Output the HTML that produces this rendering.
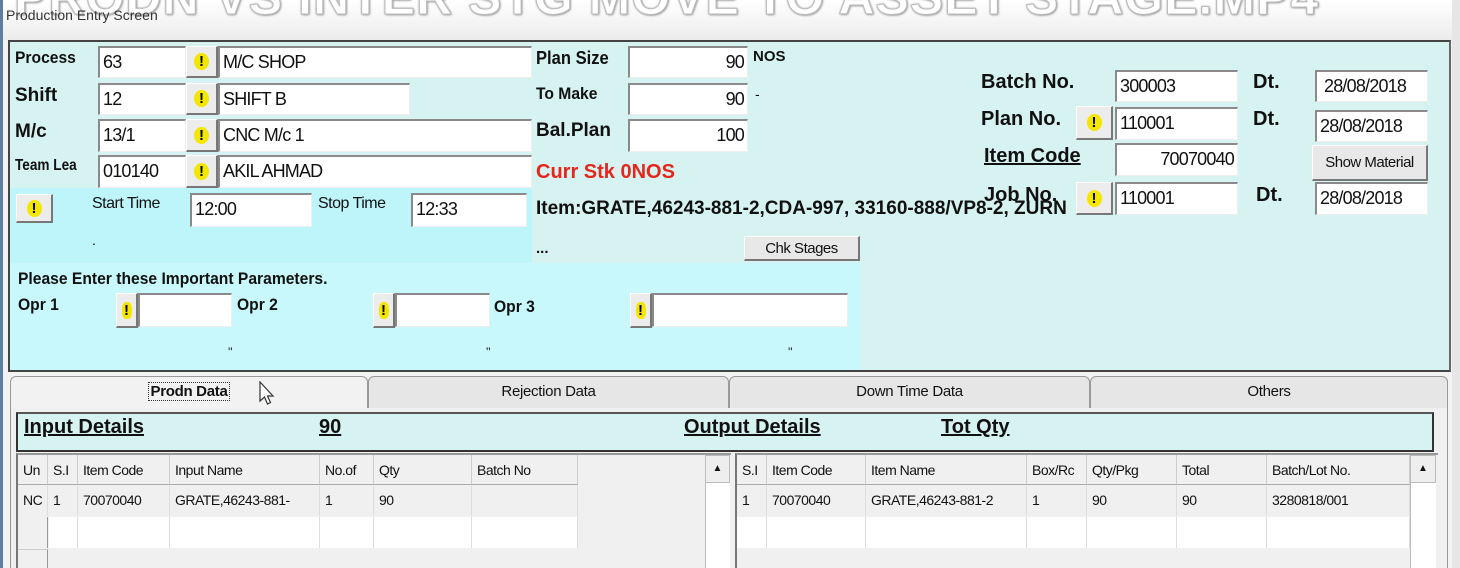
<!DOCTYPE html>
<html><head><meta charset="utf-8">
<style>
*{box-sizing:border-box;margin:0;padding:0}
html,body{width:1460px;height:568px;overflow:hidden}
body{background:#f3f3f3;font-family:"Liberation Sans",Arial,sans-serif;color:#111;position:relative}
.a{position:absolute}
.title{left:14px;top:-32px;font-size:50px;font-weight:bold;color:#fff;letter-spacing:1px;white-space:nowrap;text-shadow:0 0 2px #888,1px 1px 2px #999;-webkit-text-stroke:1px #bbb}
.inp{position:absolute;background:#fff;border-top:2px solid #8a8a8a;border-left:2px solid #8a8a8a;border-right:1px solid #eee;border-bottom:1px solid #eee;font-size:18px;padding:4px 3px 0 3px;white-space:nowrap;overflow:hidden;letter-spacing:-0.8px}
.r{text-align:right}
.btn{position:absolute;background:#ececec;border:1px solid #fff;border-right:2px solid #777;border-bottom:2px solid #777;display:flex;align-items:center;justify-content:center}
.ex{width:15px;height:17px;border-radius:50%;background:#f5e600;font-weight:bold;font-size:15px;line-height:17px;text-align:center;color:#000}
.lb{position:absolute;font-weight:bold;font-size:17px;white-space:nowrap}
.lbn{position:absolute;font-size:16px;white-space:nowrap;font-weight:bold;transform:scaleX(.92);transform-origin:left}
.pbtn{position:absolute;background:#e8e8e8;border:1px solid #fff;border-right:2px solid #777;border-bottom:2px solid #777;font-size:15px;text-align:center;letter-spacing:-0.5px}
.tab{position:absolute;top:376px;height:32px;background:#e6e6e6;border:1px solid #999;border-bottom:none;border-radius:6px 6px 0 0;font-size:15px;text-align:center;line-height:30px;letter-spacing:-0.3px}
.g{position:absolute;font-size:14px;letter-spacing:-0.5px}
.g div{position:absolute;white-space:nowrap;overflow:hidden;padding-left:5px}
.h{height:30px;line-height:30px;background:#f0f0f0;border-right:1px solid #ccc;border-bottom:1px solid #aaa}
.c{height:31px;line-height:31px;border-right:1px solid #ddd}
.w{background:#fff}
</style></head><body>
<div class="a" style="left:0;top:0;width:1460px;height:40px;background:linear-gradient(#fff,#ececec)"></div>
<div class="a title">PRODN VS INTER STG MOVE TO ASSET STAGE.MP4</div>
<div class="a" style="left:6px;top:7px;font-size:14px;color:#333">Production Entry Screen</div>
<div class="a" style="left:0;top:0;width:3px;height:568px;background:#5a7fa0"></div>
<div class="a" style="left:1452px;top:0;width:8px;height:568px;background:#e6e6e6"></div>

<div class="a" style="left:8px;top:40px;width:1443px;height:332px;background:#d6f3f1;border:2px solid #444;border-right-color:#666"></div>
<div class="a" style="left:10px;top:188px;width:522px;height:75px;background:#bdf5fa"></div>
<div class="a" style="left:10px;top:263px;width:850px;height:107px;background:#c8f8fb"></div>

<div class="lbn" style="left:15px;top:48px;font-size:17px">Process</div>
<div class="inp" style="left:98px;top:46px;width:88px;height:32px">63</div>
<div class="btn" style="left:186px;top:46px;width:32px;height:32px"><div class="ex">!</div></div>
<div class="inp" style="left:218px;top:46px;width:314px;height:32px">M/C SHOP</div>

<div class="lb" style="left:15px;top:85px;font-size:19px">Shift</div>
<div class="inp" style="left:98px;top:83px;width:88px;height:32px">12</div>
<div class="btn" style="left:186px;top:83px;width:32px;height:32px"><div class="ex">!</div></div>
<div class="inp" style="left:218px;top:83px;width:192px;height:32px">SHIFT B</div>

<div class="lb" style="left:15px;top:121px;font-size:19px">M/c</div>
<div class="inp" style="left:98px;top:119px;width:88px;height:33px">13/1</div>
<div class="btn" style="left:186px;top:119px;width:32px;height:33px"><div class="ex">!</div></div>
<div class="inp" style="left:218px;top:119px;width:314px;height:33px">CNC M/c 1</div>

<div class="lbn" style="left:15px;top:157px;font-size:16px;transform:scaleX(.85)">Team Lea</div>
<div class="inp" style="left:98px;top:155px;width:88px;height:33px">010140</div>
<div class="btn" style="left:186px;top:155px;width:32px;height:33px"><div class="ex">!</div></div>
<div class="inp" style="left:218px;top:155px;width:314px;height:33px">AKIL AHMAD</div>

<div class="btn" style="left:16px;top:194px;width:37px;height:29px"><div class="ex">!</div></div>
<div class="a" style="left:92px;top:195px;font-size:16px;letter-spacing:-0.5px">Start Time</div>
<div class="inp" style="left:190px;top:193px;width:122px;height:34px">12:00</div>
<div class="a" style="left:318px;top:195px;font-size:16px;letter-spacing:-0.5px">Stop Time</div>
<div class="inp" style="left:411px;top:193px;width:116px;height:34px">12:33</div>
<div class="a" style="left:92px;top:232px;font-size:14px">.</div>

<div class="lbn" style="left:536px;top:48px;font-size:18px">Plan Size</div>
<div class="inp r" style="left:628px;top:46px;width:120px;height:32px">90</div>
<div class="lb" style="left:753px;top:48px;font-size:15px">NOS</div>
<div class="lbn" style="left:536px;top:84px;font-size:17px">To Make</div>
<div class="inp r" style="left:628px;top:83px;width:120px;height:32px">90</div>
<div class="a" style="left:755px;top:86px;font-size:14px">-</div>
<div class="lb" style="left:536px;top:120px;font-size:19px">Bal.Plan</div>
<div class="inp r" style="left:628px;top:119px;width:120px;height:33px">100</div>
<div class="lb" style="left:536px;top:161px;font-size:20px;color:#e4261c">Curr Stk 0NOS</div>
<div class="lbn" style="left:536px;top:198px;font-size:19px;transform:scaleX(1.0)">Item:GRATE,46243-881-2,CDA-997, 33160-888/VP8-2, ZURN</div>
<div class="lb" style="left:536px;top:240px;font-size:15px">...</div>
<div class="pbtn" style="left:744px;top:236px;width:116px;height:25px;line-height:23px">Chk Stages</div>

<div class="lb" style="left:981px;top:71px;font-size:20px">Batch No.</div>
<div class="inp" style="left:1115px;top:70px;width:123px;height:32px">300003</div>
<div class="lb" style="left:1253px;top:71px;font-size:20px">Dt.</div>
<div class="inp" style="left:1315px;top:70px;width:113px;height:32px;padding-left:7px">28/08/2018</div>

<div class="lb" style="left:981px;top:108px;font-size:20px">Plan No.</div>
<div class="btn" style="left:1076px;top:106px;width:37px;height:34px"><div class="ex">!</div></div>
<div class="inp" style="left:1115px;top:107px;width:123px;height:33px">110001</div>
<div class="lb" style="left:1253px;top:108px;font-size:20px">Dt.</div>
<div class="inp" style="left:1315px;top:110px;width:113px;height:32px">28/08/2018</div>

<div class="lb" style="left:984px;top:145px;font-size:20px;text-decoration:underline">Item Code</div>
<div class="inp r" style="left:1115px;top:143px;width:123px;height:33px">70070040</div>
<div class="pbtn" style="left:1312px;top:145px;width:116px;height:36px;line-height:34px">Show Material</div>

<div class="lb" style="left:984px;top:184px;font-size:20px">Job No.</div>
<div class="btn" style="left:1076px;top:182px;width:37px;height:33px"><div class="ex">!</div></div>
<div class="inp" style="left:1115px;top:182px;width:123px;height:33px">110001</div>
<div class="lb" style="left:1256px;top:184px;font-size:20px">Dt.</div>
<div class="inp" style="left:1315px;top:182px;width:113px;height:33px">28/08/2018</div>

<div class="lbn" style="left:18px;top:269px;font-size:17px">Please Enter these Important Parameters.</div>
<div class="lbn" style="left:18px;top:295px;font-size:17px">Opr 1</div>
<div class="btn" style="left:116px;top:293px;width:22px;height:35px"><div class="ex" style="width:10px;border-radius:40%">!</div></div>
<div class="inp" style="left:138px;top:293px;width:94px;height:34px"></div>
<div class="lbn" style="left:237px;top:295px;font-size:17px">Opr 2</div>
<div class="btn" style="left:373px;top:293px;width:22px;height:35px"><div class="ex" style="width:10px;border-radius:40%">!</div></div>
<div class="inp" style="left:395px;top:293px;width:95px;height:34px"></div>
<div class="lbn" style="left:494px;top:297px;font-size:17px">Opr 3</div>
<div class="btn" style="left:630px;top:293px;width:22px;height:35px"><div class="ex" style="width:10px;border-radius:40%">!</div></div>
<div class="inp" style="left:652px;top:293px;width:196px;height:34px"></div>
<div class="a" style="left:228px;top:345px;font-size:12px">''</div>
<div class="a" style="left:486px;top:345px;font-size:12px">''</div>
<div class="a" style="left:788px;top:345px;font-size:12px">''</div>

<div class="a" style="left:10px;top:407px;width:1438px;height:161px;background:#f0f0f0;border-left:1px solid #999;border-right:1px solid #999"></div>
<div class="tab" style="left:10px;width:358px;background:#f2f2f2"><span style="font-weight:bold;outline:1px dotted #333;padding:0 1px">Prodn Data</span></div>
<div class="tab" style="left:368px;width:361px">Rejection Data</div>
<div class="tab" style="left:729px;width:361px">Down Time Data</div>
<div class="tab" style="left:1090px;width:358px">Others</div>
<svg class="a" style="left:258px;top:381px" width="20" height="26" viewBox="0 0 20 26"><path d="M2 1 L2 20 L6.5 16 L9.5 23 L12.5 21.5 L9.5 15 L15 15 Z" fill="#fff" stroke="#333" stroke-width="1.2"/></svg>

<div class="a" style="left:16px;top:412px;width:1418px;height:40px;background:#d6f3f1;border:2px solid #333;border-top-color:#555"></div>
<div class="lb" style="left:24px;top:416px;font-size:20px;text-decoration:underline">Input Details</div>
<div class="lb" style="left:319px;top:416px;font-size:20px;text-decoration:underline">90</div>
<div class="lb" style="left:684px;top:416px;font-size:20px;text-decoration:underline">Output Details</div>
<div class="lb" style="left:941px;top:416px;font-size:20px;text-decoration:underline">Tot Qty</div>

<div class="a" style="left:16px;top:453px;width:715px;height:115px;background:#f0f0f0;border-left:2px solid #777;border-top:2px solid #999"></div>
<div class="g" style="left:18px;top:455px">
<div class="h" style="left:0;width:30px">Un</div><div class="h" style="left:30px;width:30px">S.I</div><div class="h" style="left:60px;width:92px">Item Code</div><div class="h" style="left:152px;width:150px">Input Name</div><div class="h" style="left:302px;width:54px">No.of</div><div class="h" style="left:356px;width:98px">Qty</div><div class="h" style="left:454px;width:106px">Batch No</div>
<div class="c" style="top:30px;left:0;width:30px">NC</div><div class="c" style="top:30px;left:30px;width:30px">1</div><div class="c" style="top:30px;left:60px;width:92px">70070040</div><div class="c" style="top:30px;left:152px;width:150px">GRATE,46243-881-</div><div class="c" style="top:30px;left:302px;width:54px">1</div><div class="c" style="top:30px;left:356px;width:98px">90</div><div class="c" style="top:30px;left:454px;width:106px"></div>
<div class="c" style="top:62px;left:0;width:30px;border-right:1px solid #999"></div><div class="c w" style="top:62px;left:31px;width:29px"></div><div class="c w" style="top:62px;left:60px;width:92px"></div><div class="c w" style="top:62px;left:152px;width:150px"></div><div class="c w" style="top:62px;left:302px;width:54px"></div><div class="c w" style="top:62px;left:356px;width:98px"></div><div class="c w" style="top:62px;left:454px;width:106px"></div>
<div class="c" style="top:94px;left:0;width:30px;border-right:1px solid #999;border-top:1px solid #ccc"></div>
</div>
<div class="a" style="left:705px;top:455px;width:25px;height:113px;background:#fff;border-left:1px solid #bbb"></div>
<div class="a" style="left:705px;top:455px;width:25px;height:28px;background:#eee;border:1px solid #bbb;font-size:10px;text-align:center;line-height:26px">▲</div>

<div class="a" style="left:735px;top:453px;width:703px;height:115px;background:#f0f0f0;border-left:2px solid #777;border-top:2px solid #999"></div>
<div class="g" style="left:737px;top:455px">
<div class="h" style="left:0;width:30px">S.I</div><div class="h" style="left:30px;width:99px">Item Code</div><div class="h" style="left:129px;width:161px">Item Name</div><div class="h" style="left:290px;width:60px">Box/Rc</div><div class="h" style="left:350px;width:90px">Qty/Pkg</div><div class="h" style="left:440px;width:90px">Total</div><div class="h" style="left:530px;width:143px">Batch/Lot No.</div>
<div class="c" style="top:30px;left:0;width:30px">1</div><div class="c" style="top:30px;left:30px;width:99px">70070040</div><div class="c" style="top:30px;left:129px;width:161px">GRATE,46243-881-2</div><div class="c" style="top:30px;left:290px;width:60px">1</div><div class="c" style="top:30px;left:350px;width:90px">90</div><div class="c" style="top:30px;left:440px;width:90px">90</div><div class="c" style="top:30px;left:530px;width:143px">3280818/001</div>
<div class="c w" style="top:62px;left:0;width:30px"></div><div class="c w" style="top:62px;left:30px;width:99px"></div><div class="c w" style="top:62px;left:129px;width:161px"></div><div class="c w" style="top:62px;left:290px;width:60px"></div><div class="c w" style="top:62px;left:350px;width:90px"></div><div class="c w" style="top:62px;left:440px;width:90px"></div><div class="c w" style="top:62px;left:530px;width:143px"></div>
</div>
<div class="a" style="left:1410px;top:455px;width:26px;height:113px;background:#fff;border-left:1px solid #bbb"></div>
<div class="a" style="left:1410px;top:455px;width:26px;height:28px;background:#eee;border:1px solid #bbb;font-size:10px;text-align:center;line-height:26px">▲</div>
</body></html>
